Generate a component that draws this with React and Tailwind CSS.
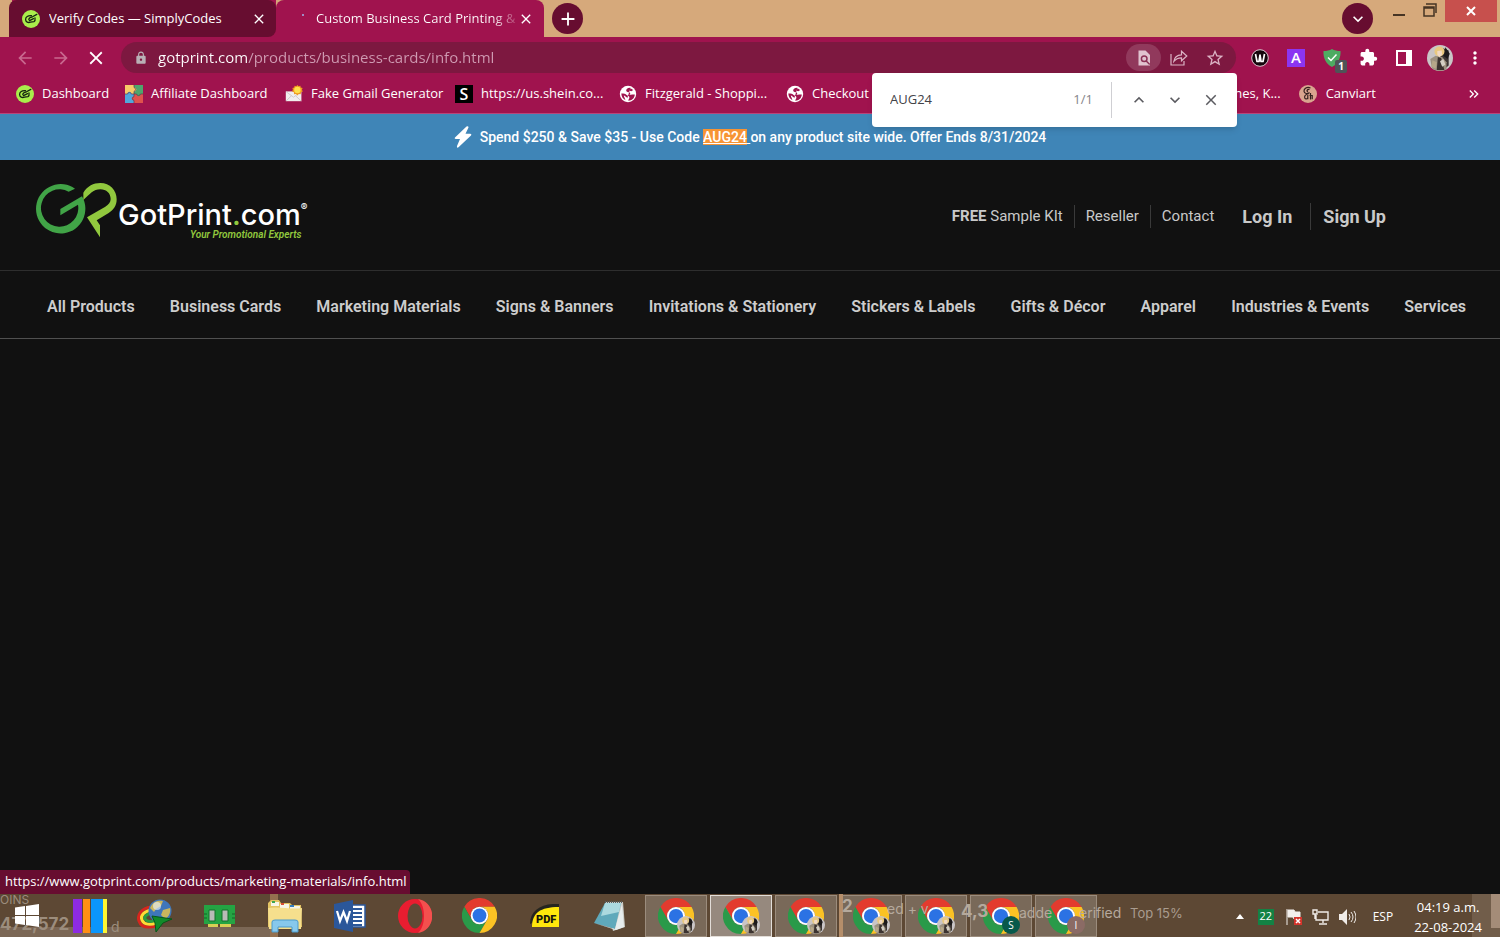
import React from "react";
import { MdExtension, MdMoreVert, MdLock, MdStarOutline, MdArrowBack, MdArrowForward, MdClose, MdAdd, MdKeyboardArrowUp, MdKeyboardArrowDown, MdOutlineKeyboardDoubleArrowRight } from "react-icons/md";

const SimplyIcon = () => (
  <svg viewBox="0 0 18 18" className="size-[18px] shrink-0" aria-hidden="true">
    <circle cx="9" cy="9" r="9" fill="#a9ee4b" />
    <path d="M9.500 5.600C6 5.200 3.500 7 3.600 9.500C3.700 12 6 13 8.500 12.200L12 11.600C13 11 13.200 9 13 7.800M6.800 9.600C6.800 7.800 8.500 7.200 10.500 6.800L14.800 4.400M7.500 10.600L11.500 8.600" fill="none" stroke="#152312" strokeWidth="1.300" strokeLinecap="round" strokeLinejoin="round" />
  </svg>
);

const PuzzleIcon = () => (
  <svg viewBox="0 0 18 18" className="size-[18px] shrink-0" aria-hidden="true">
    <path d="M0 0h9v9H0z" fill="#f7cb68" />
    <path d="M9 0h9v9H9z" fill="#4ea66c" />
    <path d="M0 9h9v9H0z" fill="#51a8dc" />
    <path d="M9 9h9v9H9z" fill="#e0524d" />
    <circle cx="9.3" cy="4.4" r="2" fill="#f7cb68" />
    <circle cx="13.6" cy="9.2" r="2" fill="#4ea66c" />
    <circle cx="8.7" cy="13.6" r="2" fill="#e0524d" />
    <circle cx="4.4" cy="8.8" r="2" fill="#51a8dc" />
    <path d="M9 0v2.500a2 2 0 0 1 0 3.900V9M0 9h2.500a2 2 0 0 1 3.900 0H11.600a2 2 0 0 0 3.900 0H18M9 9v2.600a2 2 0 0 0 0 3.900V18" fill="none" stroke="#5c3650" strokeWidth=".7" />
  </svg>
);

const MailIcon = () => (
  <svg viewBox="0 0 18 18" className="size-[18px] shrink-0" aria-hidden="true">
    <path d="M.8 6.400h15.600v9.800H.8z" fill="#f1eeee" />
    <path d="M1 6.600l7.500 5.600 7.600-5.600M1 16l5.400-5.200M16.200 16l-5.600-5.200" fill="none" stroke="#c9c3c6" strokeWidth=".8" />
    <path d="M12.400 0l1.200 1.300 1.800-.6.3 1.900 1.900.5-.7 1.700.9 1.700-1.800.8-.3 1.900-1.900-.1-1.400 1.300-1.400-1.300-1.900.1-.2-1.900L7 6.400l.9-1.700L7.400 3l1.800-.5.4-1.800 1.700.5z" fill="#ee9a1f" />
    <circle cx="12.400" cy="5" r="3.200" fill="#ffe04b" />
  </svg>
);

const GlobeIcon = () => (
  <svg viewBox="0 0 18 18" className="size-[18px] shrink-0" aria-hidden="true">
    <circle cx="9" cy="9" r="8.200" fill="#fff" />
    <path d="M11.500 2.800C8.500 2.600 7 4.200 7.200 5.800C7.400 7.400 9.400 7 10.600 7.400C11.600 7.800 11.400 9 10.400 9.200C11.600 10.400 13.600 9.200 15.800 9.600C15.600 13.400 12.600 15.800 9.400 15.800C9 14.400 10.400 13.800 10.400 12.400C10.400 10.800 8.600 11 7.600 10C6.600 9 5 8.600 2.300 8.600C2.400 11.800 4.200 14.200 6.400 15.200C6.200 13.400 5 12.400 4.800 10.600C6 10.800 6.600 12 8 12.400C8.600 12.800 8 14 7.600 15.600" fill="#a0134e" />
    <path d="M11.600 3.200l2.600 1.700-1.800 1.400-2-.6z" fill="#a0134e" />
  </svg>
);

const SheinIcon = () => (
  <span className="flex size-[18px] shrink-0 items-center justify-center bg-black text-[16px] font-semibold leading-none text-white">S</span>
);

const CanviIcon = () => (
  <svg viewBox="0 0 18 18" className="size-[18px] shrink-0" aria-hidden="true">
    <circle cx="9" cy="9" r="9" fill="#d9a58f" />
    <path d="M11.500 3C8 1.500 4.800 3.600 5 6.300c.2 2.400 3.500 3 5.500 1.200M10.500 4.500c-2.500-.5-3.300 2-1.500 2.500M8 9.500c-2 .3-2.700 2-2.200 3.500.6 1.500 2.600 1.200 3-.4V9.600v4.700M11.500 8v6.500M13.200 10v4.300M10.500 10.500h3" stroke="#33211f" strokeWidth="1.200" fill="none" />
  </svg>
);

const Avatar = ({ className }) => (
  <svg viewBox="0 0 24 24" className={className} aria-hidden="true">
    <clipPath id="face"><circle cx="12" cy="12" r="12" /></clipPath>
    <g clipPath="url(#face)">
      <path d="M0 0h24v24H0z" fill="#c9c5c6" />
      <path d="M15 3l5 2v14l-5 4-4-9z" fill="#3c3634" />
      <path d="M17 2l4 6-2 5-4-3z" fill="#1c1a1b" />
      <path d="M3 13l5-3 6 1 4 5v8H5z" fill="#9c917f" />
      <path d="M10 11l3 1 3 11H9z" fill="#3b3330" />
      <path d="M5 14l4 2-1 6-4-2z" fill="#b5a789" />
      <circle cx="11.500" cy="6" r="4.600" fill="#e8c87e" />
      <path d="M9.500 5.500l4-.500.5 4-2.500 2-2-2z" fill="#f1d9c4" />
      <path d="M12 15l3-2 2 5-3 2z" fill="#d4cfc5" />
    </g>
  </svg>
);

const ChromeLogo = ({ className }) => (
  <svg viewBox="0 0 48 48" className={className} aria-hidden="true">
    <path d="M24 12H44.800A24 24 0 0 0 3.200 12L13.600 30A12 12 0 0 1 24 12Z" fill="#e33b2e" />
    <path d="M3.200 12A24 24 0 0 0 24 48L34.400 30A12 12 0 0 1 13.600 30Z" fill="#2a9a49" />
    <path d="M24 48A24 24 0 0 0 44.800 12H24A12 12 0 0 1 34.400 30Z" fill="#fbc224" />
    <circle cx="24" cy="24" r="12" fill="#fff" />
    <circle cx="24" cy="24" r="9.500" fill="#2b72e4" />
  </svg>
);

const bookmarks = [
  { label: "Dashboard", icon: <SimplyIcon /> },
  { label: "Affiliate Dashboard", icon: <PuzzleIcon /> },
  { label: "Fake Gmail Generator", icon: <MailIcon /> },
  { label: "https://us.shein.co...", icon: <SheinIcon /> },
  { label: "Fitzgerald - Shoppi...", icon: <GlobeIcon /> },
  { label: "Checkout", icon: <GlobeIcon /> },
];

const categories = ["All Products", "Business Cards", "Marketing Materials", "Signs & Banners", "Invitations & Stationery", "Stickers & Labels", "Gifts & Décor", "Apparel", "Industries & Events", "Services"];

function TabStrip() {
  return (
    <div className="flex h-[37px] items-start bg-[#d6a97b]">
      <div className="flex h-full bg-[linear-gradient(90deg,#d6a97b_12px,#a0134e_12px)] pl-[9px]">
        <div className="flex h-full w-[267px] items-center rounded-lg rounded-bl-none bg-[#670d30] pl-[13px] pr-2">
          <SimplyIcon />
          <span className="ml-[9px] flex-1 truncate">Verify Codes — SimplyCodes</span>
          <button aria-label="Close tab" className="flex size-[18px] items-center justify-center"><MdClose size={16} /></button>
        </div>
      </div>
      <div className="flex h-full w-[268px] items-center rounded-t-lg bg-[#a0134e] pl-[26px] pr-[9px]">
        <span className="mb-2 size-[2px] rounded-full bg-[#9fb6ee]" />
        <span className="ml-[12px] flex-1 overflow-hidden whitespace-nowrap bg-[linear-gradient(90deg,#fff_88%,#a0134e_102%)] bg-clip-text text-transparent">Custom Business Card Printing &amp;</span>
        <button aria-label="Close tab" className="flex size-[18px] items-center justify-center"><MdClose size={16} /></button>
      </div>
      <button aria-label="New tab" className="ml-2 mt-[3px] flex size-[31px] items-center justify-center rounded-full bg-[#670d30]"><MdAdd size={22} /></button>
      <div className="ml-auto flex items-start pr-[3px] text-[#463424]">
        <button aria-label="Search tabs" className="mt-[3px] flex size-[31px] items-center justify-center rounded-full bg-[#670d30] text-white"><MdKeyboardArrowDown size={20} /></button>
        <button aria-label="Minimize" className="ml-[20px] flex h-[22px] w-[12px] items-start pt-[14px]"><span className="h-[2px] w-full bg-[#463424]" /></button>
        <button aria-label="Restore" className="ml-[18px] mt-[3px]">
          <svg viewBox="0 0 14 14" className="size-[14px]"><path d="M3 1h10v9M1 4h10v9H1zM1 5h10" fill="none" stroke="#463424" strokeWidth="1.500" /></svg>
        </button>
        <button aria-label="Close window" className="ml-[8px] flex h-[22px] w-[52px] items-center justify-center bg-[#c7504d] text-white">
          <svg viewBox="0 0 10 10" className="size-[10px]"><path d="M1 1l8 8M9 1L1 9" stroke="#fff" strokeWidth="2" /></svg>
        </button>
      </div>
    </div>
  );
}

function Toolbar() {
  return (
    <div className="flex h-[42px] items-center pb-px pl-[15px] pr-[16px]">
      <button aria-label="Back" className="text-[#c9698f]"><MdArrowBack size={20} /></button>
      <button aria-label="Forward" className="ml-[16px] text-[#c9698f]"><MdArrowForward size={20} /></button>
      <button aria-label="Stop loading" className="ml-[14px]"><MdClose size={22} /></button>
      <div className="ml-[14px] flex h-[31px] flex-1 items-center rounded-full bg-[#7d1840] pl-[13px] pr-[3px] text-[#dbb3c4]">
        <MdLock size={14} className="text-[#b9b0b5]" />
        <input aria-label="Address" defaultValue="gotprint.com/products/business-cards/info.html" spellCheck="false" className="ml-[10px] min-w-0 flex-1 bg-[linear-gradient(90deg,#fff_89px,#cf9bb2_89px)] bg-clip-text text-[15px] text-transparent outline-none" />
        <button aria-label="Find in page" className="flex h-[27px] w-[35px] items-center justify-center rounded-full bg-[#91395c]">
          <svg viewBox="0 0 14 16" className="h-[16px] w-[14px]"><path d="M1.500.5h7L13 5v10.500H1.500z" fill="#e0c3cf" /><circle cx="7.200" cy="8.800" r="2.800" fill="none" stroke="#8a3055" strokeWidth="1.500" /><path d="M9.200 11l3.500 3.500" stroke="#8a3055" strokeWidth="1.500" /></svg>
        </button>
        <button aria-label="Share" className="ml-[9px]">
          <svg viewBox="0 0 18 16" className="h-[16px] w-[18px]"><path d="M1 4v11h13v-4M3.800 11.500c.5-4 3-6.500 7.700-6.700V1.200L16.800 6l-5.300 4.800V7.900c-3.500 0-5.700 1-7.700 3.600z" fill="none" stroke="#dbb3c4" strokeWidth="1.200" /></svg>
        </button>
        <button aria-label="Bookmark this page" className="ml-[17px] mr-[8px]"><MdStarOutline size={20} /></button>
      </div>
      <div className="ml-[15px] flex items-center gap-[18px]">
        <button aria-label="W extension">
          <svg viewBox="0 0 18 18" className="size-[18px]"><circle cx="9" cy="9" r="8.300" fill="#16070d" stroke="#d9c8cf" strokeWidth="1" /><path d="M4.500 5l1.500 7.500h2L9 6l1 6.500h2L13.500 5" fill="none" stroke="#fff" strokeWidth="1.700" strokeLinejoin="round" /></svg>
        </button>
        <button aria-label="A extension" className="flex size-[18px] items-center justify-center bg-[#8b35f2] text-[15px] font-semibold leading-none">A</button>
        <button aria-label="Shield extension" className="relative size-[18px]">
          <svg viewBox="0 0 18 18" className="size-[18px]"><path d="M9 0c2.500 1.500 5 2 8.500 2C18 9 15 15 9 18 3 15 0 9 .5 2 4 2 6.500 1.500 9 0z" fill="#4eab62" /><path d="M5 8.500l3 3 5.500-6" fill="none" stroke="#fff" strokeWidth="1.500" /></svg>
          <span className="absolute -bottom-[6px] -right-[6px] flex h-[13px] w-[12px] items-center justify-center rounded-[2px] bg-[#4e5457] text-[10px] font-bold leading-none">1</span>
        </button>
        <button aria-label="Extensions"><MdExtension size={19} /></button>
        <button aria-label="Side panel">
          <svg viewBox="0 0 16 16" className="size-[16px]"><path d="M0 0h16v16H0zM2 2v12h8V2z" fill="#fff" fillRule="evenodd" /></svg>
        </button>
        <button aria-label="Profile" className="-ml-[3px] -mr-[6px]"><Avatar className="size-[26px]" /></button>
        <button aria-label="Menu" className="-mr-px"><MdMoreVert size={20} /></button>
      </div>
    </div>
  );
}

function BookmarksBar() {
  return (
    <nav aria-label="Bookmarks" className="flex h-[35px] items-center border-b border-[#b8467a] pb-[5px] pl-[16px] pr-[18px]">
      <div className="grid grid-cols-[109px_160px_170px_164px_167px_auto]">
        {bookmarks.map((b) => (
          <a key={b.label} href="#" className="flex items-center gap-[8px] whitespace-nowrap">{b.icon}{b.label}</a>
        ))}
      </div>
      <a href="#" className="ml-auto">hes, K...</a>
      <a href="#" className="ml-[18px] flex items-center gap-[9px]"><CanviIcon />Canviart</a>
      <button aria-label="More bookmarks" className="ml-[90px]"><MdOutlineKeyboardDoubleArrowRight size={16} /></button>
    </nav>
  );
}

function FindBar() {
  return (
    <div className="absolute right-[263px] top-[73px] z-10 flex h-[54px] w-[365px] items-center rounded bg-white pl-[18px] pr-[17px] text-[#5b5b60] shadow-md">
      <input aria-label="Find" defaultValue="AUG24" className="min-w-0 flex-1 text-[13px] text-[#434347] outline-none" />
      <span className="text-[#85858a]">1/1</span>
      <span className="ml-[18px] h-[36px] w-px bg-[#cfcfd3]" />
      <button aria-label="Previous match" className="ml-[17px]"><MdKeyboardArrowUp size={20} /></button>
      <button aria-label="Next match" className="ml-[16px]"><MdKeyboardArrowDown size={20} /></button>
      <button aria-label="Close find bar" className="ml-[17px]"><MdClose size={18} /></button>
    </div>
  );
}

function SiteHeader() {
  return (
    <header>
      <div className="flex h-[111px] items-center border-b border-[#2e2e2e] pl-[34px] pr-[114px] text-[#c9c9c9]">
        <a href="#" aria-label="GotPrint.com" className="flex items-start pb-[8px]">
          <svg viewBox="45 50 250 168" className="h-[56px] w-[84px]" aria-hidden="true">
            <path d="M167 70A74 74 0 1 0 188 93L123 131V150L176 118A56 56 0 1 1 148 79Z" fill="#41a447" />
            <path d="M192 82C205 62 222 53 243 53C272 53 292 75 292 102C292 122 282 134 268 143L232 165L242 180V216L203 156L258 124C268 118 274 111 274 101C274 84 261 72 243 72C222 72 212 86 192 104Z" fill="#91c83e" />
          </svg>
          <span className="mt-[18px] flex flex-col items-end">
            <span className="flex font-[Inter] text-[29px] font-medium leading-[30px] text-white">GotPrint<span className="text-[#91c83e]">.</span>com<span className="text-[10px] leading-[14px]">®</span></span>
            <span className="mr-[6px] text-[10px] font-semibold italic leading-[10px] text-[#91c83e]">Your Promotional Experts</span>
          </span>
        </a>
        <div className="ml-auto flex items-center pt-[3px] text-[15px]">
          <a href="#"><b>FREE</b> Sample KIt</a>
          <a href="#" className="ml-[11px] border-l border-[#3a3a3a] pl-[11px]">Reseller</a>
          <a href="#" className="ml-[11px] border-l border-[#3a3a3a] pl-[11px]">Contact</a>
          <a href="#" className="ml-[28px] text-[18px] font-bold">Log In</a>
          <a href="#" className="ml-[18px] border-l border-[#3a3a3a] pl-[12px] text-[18px] font-bold">Sign Up</a>
        </div>
      </div>
      <nav className="flex h-[68px] items-center justify-between border-b border-[#505050] pl-[47px] pr-[34px] pt-[4px] text-[16px] font-semibold text-[#cdcdcd]">
        {categories.map((c) => <a key={c} href="#">{c}</a>)}
      </nav>
    </header>
  );
}

const pinned = [
  { name: "Winrar", art: <svg viewBox="0 0 34 34" className="size-[34px]"><path d="M0 0h9v34H0z" fill="#8d2be2" /><path d="M10 0h7v34h-7z" fill="#ff8f16" /><path d="M18 0h12v34H18z" fill="#0b96fb" /><path d="M30 0h4v34h-4z" fill="#fdf532" /></svg> },
  { name: "Download manager", art: <svg viewBox="0 0 36 34" className="h-[34px] w-[36px]"><path d="M14 8C4 9 0 17 2 22c2 6 9 7 17 5" fill="none" stroke="#d7261d" strokeWidth="3" /><path d="M15 11C7 12 3 17 5 21c2 5 9 5 14 3" fill="none" stroke="#ffdc35" strokeWidth="3" /><path d="M15 14C9 15 7 18 8 20c2 3 7 3 11 1" fill="none" stroke="#2c9d3f" strokeWidth="3" /><circle cx="23" cy="12" r="11.500" fill="#3f76ba" /><path d="M13 9c3-7 9-8 13-7l-2 5-5 3-2 3zM26 11l7-2c1 4-1 9-5 11l-4-4z" fill="#c9b65e" /><circle cx="20" cy="7" r="4" fill="#e7f0f8" opacity=".65" /><path d="M15 17l20 3-9 4-7 9-1-9z" fill="#118b29" stroke="#08561a" /></svg> },
  { name: "Memory", art: <svg viewBox="0 0 31 22" className="h-[22px] w-[31px]"><path d="M0 0h31v19H0z" fill="#24a443" /><path d="M4 19h10v3H4zM16 19h11v3H16z" fill="#d7cf54" /><path d="M5 5h6v11H5zM18 5h6v11h-6z" fill="#b8bbb8" stroke="#15712c" /><path d="M0 9h3M28 9h3M0 13h3M28 13h3" stroke="#126529" /></svg> },
  { name: "File Explorer", art: <svg viewBox="0 0 36 34" className="h-[34px] w-[36px]"><path d="M1 4l3-3h8l2 3h9l2 2h9l1 22H1z" fill="#e3c463" /><path d="M4 3h8v4H4zM13 5h9v5h-9zM23 7h10v5H23z" fill="#f7f5e8" /><path d="M5 2h3v2H5z" fill="#3ba552" /><path d="M14 4h3v2h-3z" fill="#d94e35" /><path d="M23 6h4v2h-4z" fill="#347fc0" /><path d="M1 9c12-2 23 2 34 0l-1 21H2z" fill="#f6df8d" /><path d="M5 33V23q0-2 3-2h20q3 0 3 2v10h-6v-5H11v5z" fill="#87c8ec" stroke="#4d9bcc" /></svg> },
  { name: "Word", art: <svg viewBox="0 0 32 32" className="size-[32px]"><path d="M17 5h14v22H17z" fill="#fff" stroke="#2b579a" strokeWidth="1.500" /><path d="M19 9h9M19 13h9M19 17h9M19 21h9M19 25h9" stroke="#2b579a" strokeWidth="2" /><path d="M0 4L19 0v32L0 28z" fill="#2b579a" /><path d="M3 11l3 10 3.500-9 3.500 9 3-10" fill="none" stroke="#fff" strokeWidth="2.200" /></svg> },
  { name: "Opera", art: <svg viewBox="0 0 34 34" className="size-[34px]"><circle cx="17" cy="17" r="17" fill="#e91d30" /><path d="M20 0c19 3 19 31 0 34 8-7 8-27 0-34z" fill="#f4504e" /><ellipse cx="17" cy="17" rx="7.500" ry="12.500" fill="#5e4935" /></svg> },
  { name: "Chrome", art: <ChromeLogo className="size-[35px]" /> },
  { name: "PDF", art: <svg viewBox="0 0 30 24" className="h-[24px] w-[30px]"><path d="M0 20C0 6 12-1 29 0v3C17 3 8 7 4 18z" fill="#25251f" /><path d="M2 23c0-14 8-20 27-20v20z" fill="#ffe70c" /><text x="6" y="19" className="fill-[#17160b] font-[Roboto] text-[11px] font-black">PDF</text></svg> },
  { name: "Notepad", art: <svg viewBox="0 0 34 34" className="size-[34px]"><path d="M12 3h18l2 25-12 4z" fill="#caccc7" /><path d="M12 4h16l-6 26L1 24z" fill="#5fa9bb" /><path d="M12 4h16l-2 9-18 4z" fill="#abd9df" /><path d="M1 24l21 6 7-25 2 23-8 3z" fill="#e7eded" /><path d="M12 3h18" stroke="#555f60" strokeWidth="2" strokeDasharray="1 1" /></svg> },
];

const windows = ["photo", "photo", "photo", "photo", "photo", "S", "I"];

function Taskbar() {
  return (
    <footer className="relative flex h-[43px] shrink-0 items-stretch overflow-hidden bg-[#5d4834] text-white">
      <div aria-hidden="true" className="absolute inset-0 font-[Inter] text-[14px] text-[#9c8d7d]">
        <span className="absolute bottom-0 left-0 h-[10px] w-[276px] bg-[#7b6755]" />
        <span className="absolute left-[270px] top-0 h-full w-[8px] bg-[#94704f]" />
        <span className="absolute left-0 top-0 text-[12px] leading-none">OINS</span>
        <span className="absolute left-0 top-[18px] text-[17px] font-bold">472,572</span>
        <span className="absolute left-[111px] top-[22px]">d</span>
        <span className="absolute right-0 top-0 h-full w-[28px] bg-[#715d4a]" />
        <span className="absolute right-0 top-0 h-[34px] w-[9px] bg-[#a48c78]" />
      </div>
      <button aria-label="Start" className="relative flex w-[57px] items-center pl-[15px]">
        <svg viewBox="0 0 24 23" className="h-[23px] w-[24px]"><path d="M0 3.500L10 2v9H0zM11 1.900L24 0v11H11zM0 12h10v9L0 19.500zM11 12h13v11l-13-1.900z" fill="#fff" /></svg>
      </button>
      <div className="relative flex">
        {pinned.map((p) => <button key={p.name} aria-label={p.name} className="flex w-[65px] items-center justify-center">{p.art}</button>)}
      </div>
      <div className="relative ml-[3px] flex gap-[3px] pt-px">
        {windows.map((w, i) => (
          <button key={i} aria-label={"Chrome window " + (i + 1)} className={"flex w-[62px] items-center justify-center border " + (i === 1 ? "border-[#e2ddd8] bg-[#96897e]" : "border-[#9b8c7d] bg-[#796959]")}>
            <span className="relative">
              <ChromeLogo className="size-[36px]" />
              {w === "photo"
                ? <Avatar className="absolute -right-px bottom-0 size-[18px]" />
                : <span className={"absolute -right-px bottom-0 flex size-[18px] items-center justify-center rounded-full text-[10px] " + (w === "S" ? "bg-[#07594b]" : "bg-[#8b6b65]")}>{w}</span>}
            </span>
          </button>
        ))}
        <div aria-hidden="true" className="absolute inset-0 font-[Inter] text-[14px] text-[#b5a99d]">
          <span className="absolute left-[194px] top-0 h-full w-[4px] bg-[#b58e6a]" />
          <span className="absolute left-[197px] top-0 text-[17px] font-bold">2</span>
          <span className="absolute left-[242px] top-[4px] whitespace-nowrap">ed + v</span>
          <span className="absolute left-[316px] top-[5px] text-[17px] font-bold">4,3</span>
          <span className="absolute left-[374px] top-[8px]">adde</span>
          <span className="absolute left-[434px] top-[8px]">erified</span>
        </div>
      </div>
      <span className="relative ml-[33px] mt-[10px] whitespace-nowrap font-[Inter] text-[13px] text-[#a99c8f]">Top 15%</span>
      <div className="relative ml-auto flex items-center pr-[18px] pt-[2px]">
        <button aria-label="Show hidden icons"><svg viewBox="0 0 8 5" className="h-[5px] w-[8px]"><path d="M0 5l4-5 4 5z" fill="#fff" /></svg></button>
        <span className="ml-[14px] flex size-[16px] items-center justify-center bg-[#138244] text-[11px]">22</span>
        <svg viewBox="0 0 16 16" className="ml-[12px] size-[16px]"><path d="M1 0v16M2 1h6l1 2h5v7H8L7 8H2z" fill="#f2efec" stroke="#f2efec" /><path d="M8 8h8v8H8z" fill="#d5342b" /><path d="M10 10l4 4M14 10l-4 4" stroke="#fff" strokeWidth="1.500" /></svg>
        <svg viewBox="0 0 17 16" className="ml-[10px] h-[16px] w-[17px]"><path d="M6 3h10v8H4V6M11 11v3M7 15h8M1 1h4v4H1zM3 5v5" fill="none" stroke="#f0ece8" strokeWidth="1.400" /></svg>
        <svg viewBox="0 0 17 16" className="ml-[10px] h-[16px] w-[17px]"><path d="M0 5h3l5-5v16l-5-5H0z" fill="#f0ece8" /><path d="M10 5q2 3 0 6M12 3q4 5 0 10M15 2q4 6 0 12" fill="none" stroke="#f0ece8" /></svg>
        <span className="ml-[17px] text-[12px]">ESP</span>
        <span className="ml-[21px] text-center text-[13px] leading-[20px]">04:19 a.m.<br />22-08-2024</span>
      </div>
    </footer>
  );
}

export default function App() {
  return (
    <div className="relative flex min-h-screen flex-col bg-[#111111] font-['Open_Sans',sans-serif] text-[13px] text-white">
      <div className="bg-[#a0134e]">
        <TabStrip />
        <Toolbar />
        <BookmarksBar />
      </div>
      <FindBar />
      <div className="flex flex-1 flex-col font-[Roboto,sans-serif]">
        <div className="flex h-[46px] items-center justify-center bg-[#3f85b7] text-[14px] font-medium">
          <svg viewBox="0 0 18 22" className="mr-[8px] h-[22px] w-[18px]" aria-hidden="true"><path d="M12.500.5L1 11.500q-1 1.500 1 1.500h4L3 20q-.3 2.500 1.500 1.300L17 9.500q1-1.800-1-1.800h-4.500L14.500 1.500q0-1.800-2-1z" fill="#fff" /></svg>
          <p>Spend $250 &amp; Save $35 - Use Code <a href="#" className="underline"><mark className="bg-[#f79434] text-white">AUG24</mark> </a>on any product site wide. Offer Ends 8/31/2024</p>
        </div>
        <SiteHeader />
        <main className="relative flex-1">
          <div className="absolute bottom-0 left-0 flex h-[24px] items-center rounded-tr bg-[#670d30] pl-[5px] pr-[3px] font-['Open_Sans',sans-serif] text-[13px]">https://www.gotprint.com/products/marketing-materials/info.html</div>
        </main>
      </div>
      <Taskbar />
    </div>
  );
}
